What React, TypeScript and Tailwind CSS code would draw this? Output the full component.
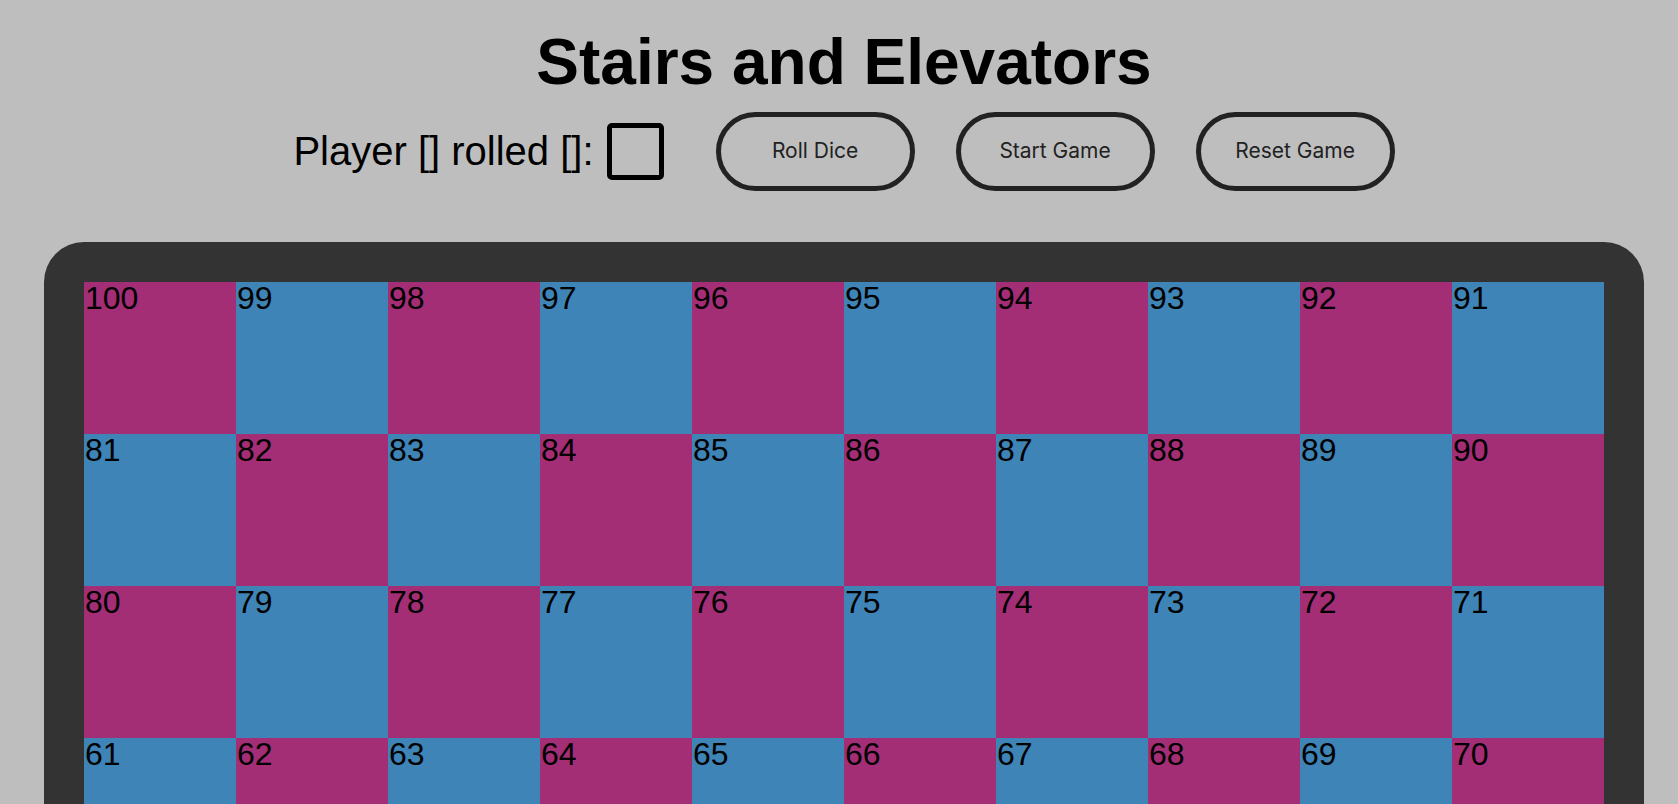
import React, { useState } from 'react';

// board is 10x10, numbered snake style with 100 in the top left
const buildRows = (): number[][] => {
    const rows: number[][] = [];
    for (let i = 0; i < 10; i++) {
        const base = (9 - i) * 10;
        const row: number[] = [];
        for (let j = 1; j <= 10; j++) {
            row.push(base + j);
        }
        // every other row runs right to left
        rows.push(i % 2 === 0 ? row.reverse() : row);
    }
    return rows;
};

const Cell: React.FC<{ num: number; dark: boolean }> = ({ num, dark }) => (
    <div className={`w-[152px] h-[152px] ${dark ? 'bg-[#a32e76]' : 'bg-[#3e84b6]'}`}>
        <span className="block text-[32px] leading-[1.05] text-black pl-px">{num}</span>
    </div>
);

const App: React.FC = () => {
    const [player, setPlayer] = useState<number | null>(null);
    const [roll, setRoll] = useState<number | null>(null);
    const rows = buildRows();

    const rollDice = () => {
        setRoll(Math.floor(Math.random() * 6) + 1);
        setPlayer((p) => (p === null ? 1 : p));
    };

    const reset = () => {
        setPlayer(null);
        setRoll(null);
    };

    return (
        <div className="min-h-screen bg-[#bebebe] font-['Liberation_Sans',Arial,sans-serif] text-black">
            <div className="ml-[44px] w-[1600px] flex flex-col items-center">
                <h1 className="mt-[26px] text-[64px] leading-[1.15] font-bold">Stairs and Elevators</h1>

                <div className="flex items-center mt-[12px]">
                    <p className="text-[40px] leading-[1.15]">
                        Player [{player ?? ''}] rolled [{roll ?? ''}]:
                    </p>
                    <div className="ml-[13px] w-[57px] h-[57px] rounded-[5px] border-[5px] border-black blur-[0.6px]" />

                    <div className="flex gap-[41px] ml-[52px] font-['Inter',sans-serif] text-[21px] text-[#222]">
                        <button
                            onClick={rollDice}
                            className="w-[199px] h-[79px] rounded-full border-[5px] border-[#222]"
                        >
                            Roll Dice
                        </button>
                        <button
                            onClick={() => setPlayer(1)}
                            className="w-[199px] h-[79px] rounded-full border-[5px] border-[#222]"
                        >
                            Start Game
                        </button>
                        <button
                            onClick={reset}
                            className="w-[199px] h-[79px] rounded-full border-[5px] border-[#222]"
                        >
                            Reset Game
                        </button>
                    </div>
                </div>

                <div className="mt-[51px] self-stretch bg-[#333333] rounded-[40px] p-[40px]">
                    <div className="grid grid-cols-[repeat(10,152px)]">
                        {rows.map((row, i) =>
                            row.map((num, j) => (
                                <Cell key={num} num={num} dark={(i + j) % 2 === 0} />
                            ))
                        )}
                    </div>
                </div>
            </div>
        </div>
    );
};

export default App;
